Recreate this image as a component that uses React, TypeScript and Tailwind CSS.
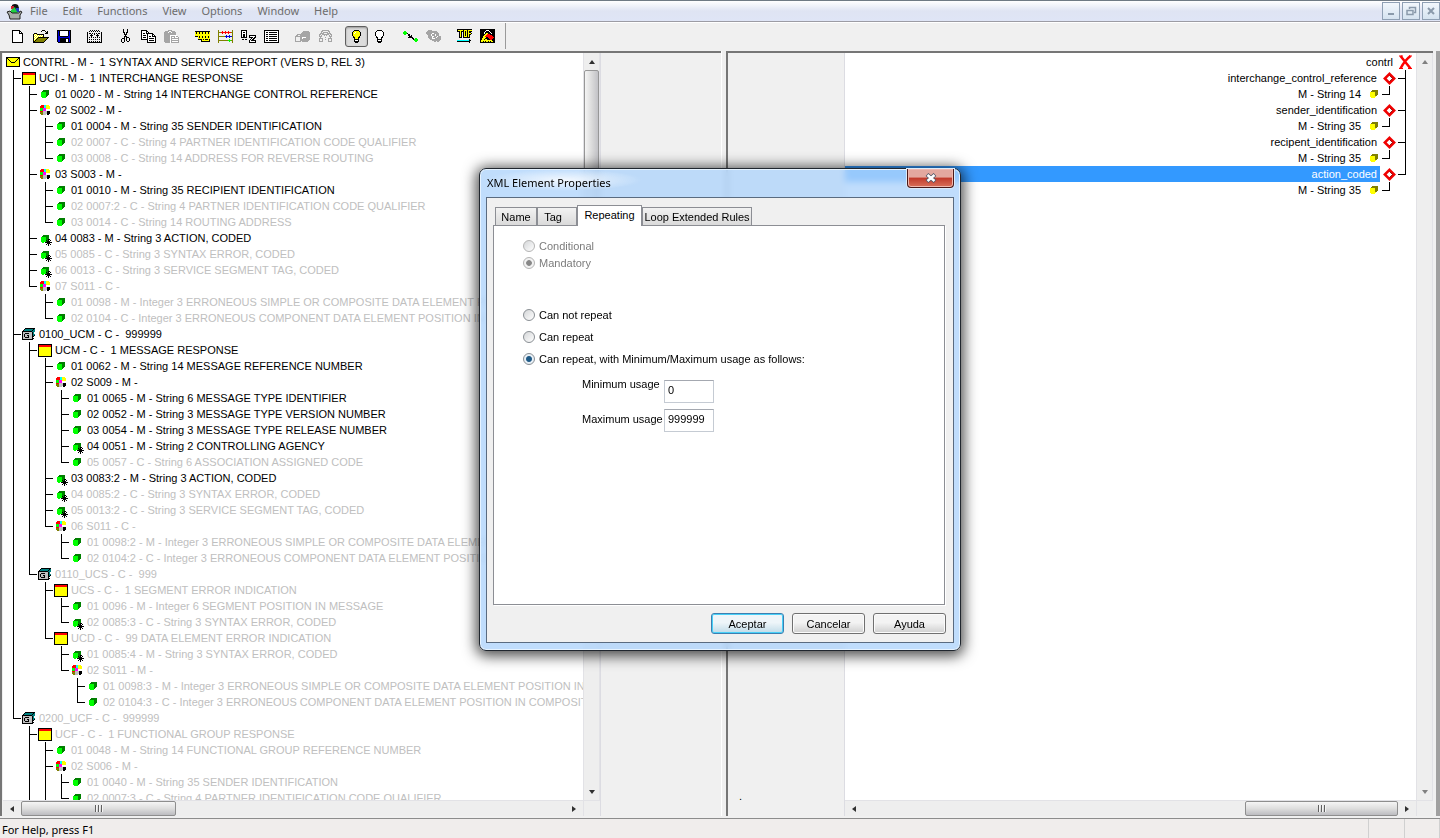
import { useState } from "react";
import type { ReactNode } from "react";
import clsx from "clsx";

const PALETTE: Record<string, string> = {
  k: "#000000",
  w: "#ffffff",
  y: "#ffff00",
  o: "#808000",
  b: "#0000d8",
  g: "#00ff00",
  d: "#008000",
  r: "#ff0000",
  c: "#00ffff",
  m: "#ff00ff",
  s: "#c0c0c0",
  a: "#a5a5a5",
  t: "#008080",
};

// Draws a bitmap glyph, one character per pixel
function Bitmap({ rows }: { rows: string[] }) {
  const width = Math.max(...rows.map((row) => row.length));
  return (
    <svg width={width} height={rows.length} viewBox={`0 0 ${width} ${rows.length}`} shapeRendering="crispEdges" className="shrink-0" aria-hidden="true">
      {rows.flatMap((row, y) =>
        [...row].map((ch, x) => (PALETTE[ch] ? <rect key={`${x}-${y}`} x={x} y={y} width="1" height="1" fill={PALETTE[ch]} /> : null)),
      )}
    </svg>
  );
}

const BITMAPS = {
  newFile: ["kkkkkkkk...", "kwwwwwwkk..", "kwwwwwwkwk.", "kwwwwwwkkkk", "kwwwwwwwwwk", "kwwwwwwwwwk", "kwwwwwwwwwk", "kwwwwwwwwwk", "kwwwwwwwwwk", "kwwwwwwwwwk", "kwwwwwwwwwk", "kwwwwwwwwwk", "kkkkkkkkkkk"],
  open: [".........kkk....", "........k...k.k.", ".............kk.", ".kkk........kkk.", "kywykkkkkkk.....", "kwywywywywk.....", "kywywywywyk.....", "kwywykkkkkkkkkkk", "kywykoooooooook.", "kwykoooooooook..", "kykoooooooook...", "kkoooooooook....", "kkkkkkkkkkk....."],
  save: ["kkkkkkkkkkkkkk", "kbkwwwwwwwwkbk", "kbkwwwwwwwwkbk", "kbkwwwwwwwwkbk", "kbkwwwwwwwwkbk", "kbkwwwwwwwwkbk", "kbbkkkkkkkkbbk", "kbbbbbbbbbbbbk", "kbbkkkkkkkkkbk", "kbbkkkkkkwwkbk", "kbbkkkkkkwwkbk", "kbbkkkkkkwwkbk", ".kkkkkkkkkkkkk"],
  compile: ["...k.k.k.k.k...", "..k.k.k.k.k.k..", "k.............k", "k.kk.k.k.k.kk.k", "k...k..k..k...k", "k..kkk...kkk..k", "k...k.....k...k", "k.k.k.k.k.k.k.k", "k.............k", "k.k.k.k.k.k.k.k", "k.............k", "k.k.k.k.k.k.k.k", "kkkkkkkkkkkkkkk"],
  cut: ["..k...k..", "..k...k..", "..k...k..", "..kk.kk..", "...k.k...", "...kkk...", "....k....", "...kkk...", "...k.kkk.", ".kkk.k..k", "k..k.k..k", "k..k.k..k", "k..k..kk.", ".kk......"],
  copy: ["kkkkkk.........", "kwwwwkk........", "kwwwwkwk.......", "kwkkwkkkkkkk...", "kwwwwwkwwwwkk..", "kwkkkwkwwwwkwk.", "kwwwwwkwkkwkkkk", "kwkkkwkwwwwwwwk", "kwwwwwkwkkkkkwk", "kkkkkkkwwwwwwwk", "......kwkkkkkwk", "......kwwwwwwwk", "......kkkkkkkkk"],
  paste: ["....aaaa.......", ".aaaawwaaaa....", "aaaawaawaaaa...", "aaaaaaaaaaaa...", "aaaaaaaaaaaa...", "aaaaaawwwwwww..", "aaaaaawaaaawaa.", "aaaaaawawwawwwa", "aaaaaawaaaaaaaa", "aaaaaawawwwwwwa", "aaaaaawaaaaaaaa", "aaaaaawawwwwwwa", ".aaaaawaaaaaaaa"],
  ruler: ["kkkkkkkkkkkkkkk", "ykyykyykyykyyky", "ykyykyykyykyyky", "yyyyyyyyyyyyyyy", "yyyyyyyyyyyyyyy", "kkkykyykyykyyky", "...ykyykyykyyky", "...yyyyyyyyyyyy", "...kkkkykykkkyk", "......kyyyyyyyk", "......kkkkkkkkk"],
  abacus: ["o.............o", "o...r..r..r...o", "ooorrrrrrrrrroo", "o...r..r..r...o", "o.............o", "o.......b..b..o", "ooooooobbbbbbbo", "o.......b..b..o", "o.............o", "o..........g..o", "oooooooooogggoo", "o..........g..o", "o.............o"],
  sortAz: ["kkkkkk.........", "kwwwwk.........", "kwkkwk.........", "kwwwwk.........", "kwkkwk.........", "kwkkwk..kkkkkkk", "kwkkwk..kwwwwwk", "kkkkkk..kkkkwkk", "..........kwkk.", ".kk.kk...kwkk..", "........kwkkkkk", "........kwwwwwk", "........kkkkkkk"],
  list: ["kkkkkkkkkkkkkkk", "kwwwwwwwwwwwwwk", "kwkkwkkkkkkkkwk", "kwwwwwwwwwwwwwk", "kwkkwkkkkkkkkwk", "kwwwwwwwwwwwwwk", "kwkkwkkkkkkkkwk", "kwwwwwwwwwwwwwk", "kwkkwkkkkkkkkwk", "kwwwwwwwwwwwwwk", "kwkkwkkkkkkkkwk", "kwwwwwwwwwwwwwk", "kkkkkkkkkkkkkkk"],
  blocks: ["........aaaaaa.", ".......aaaaaaaa", "......aaaaaaaaa", "..aaaaaaaaaaaaa", ".aa..aaaaaaaaaa", "aaaaaaaaaaaaaaa", "a....aawwwwaaaa", "a....aawaaaaaaa", "a....aaaaaaaaaa", "a....aaaaaaaaa.", "aaaaaa.aaaaaa.."],
  network: ["....aaaaaaa....", "...aa.....aa...", "...a.aaaaa.a...", "..aaaa...aaaa..", ".aa.aaaaaaa.aa.", ".a.a..a.a..a.a.", ".aaa.......aaa.", "..a....a....a..", ".aaaa.....aaaa.", ".a..a..a..a..a.", ".a..a.....a..a.", ".aaaa.....aaaa."],
  bulbOn: ["..kkkkk..", ".kyyyyyk.", "kyywyyyyk", "kywyyyyyk", "kyyyyyyyk", "kyyyyyyyk", ".kyyyyyk.", ".kkyyykk.", "..kyyyk..", "..kkkkk..", "..kwwwk..", "..kkkkk..", "...kkk..."],
  bulbOff: ["..kkkkk..", ".kwwwwwk.", "kwwwwwwwk", "kwwwwwwwk", "kwwwwwwwk", "kwwwwwwwk", ".kwwwwwk.", ".kkwwwkk.", "..kwwwk..", "..kkkkk..", "..kwwwk..", "..kkkkk..", "...kkk..."],
  link: [".gg............", "gggg...........", "ggggk..........", ".gg..kk........", ".....kk.k......", "......kkk......", ".....kkkkk.....", ".........kk.gg.", "..........kgggg", "...........gggg", "............gg."],
  unlink: ["..aaaa.........", ".aaaaaaaaaa....", "aaaaaaaaaaaa...", "aaaaaawwaaaaa..", ".aaaawaaawaaa..", "..aaawaaawaaa..", "..aaaawwaaawaaa", "..aaaawaaawaaaa", "...aaawwwaaaaaa", "....aaaaaaaaaaa", "......aaaaaaaa.", "........aa.aa.."],
  tof: ["kkkkkkkkkkkkkkk", "kyyyyykyyykyyyy", "kkkykkkykykykkk", "..kyk.kykykykk.", "..kyk.kykykyyyk", "..kyk.kykykykk.", "..kyk.kykykyk..", "..kyk.kyyykyk..", "..kkk.kkkkkkk..", "...............", "............k..", "cccccccccccckk.", "kkkkkkkkkkkkk..", "............k.."],
  warning: ["kkkkkkkkkkkkkkk", "kkkkkkwwwkkkkkk", "kkkkkwkkkwkkkkk", "kkkkwkkkkkwkkkk", "kkkkwkyykkkwkkk", "kkkkkyyrrrkkkkk", "kkkkyyrrrrrrkkk", "kkkyyrrrrrrrrkk", "kkkyyykkrrrrrrk", "kkyyykkkkrrrrkk", "kkyykyykkkrrkkk", "kyyyyyyyyyyykkk", "kyykykyykykyykk", "kkkkkkkkkkkkkkk"],
  envelope: ["kkkkkkkkkkkkkk", "kkyyyyyyyyyykk", "kykyyyyyyyykyk", "kyykyyyyyykyyk", "kyyykyyyykyyyk", "kyyyykkkkyyyyk", "kyyyyyyyyyyyyk", "kyyyyyyyyyyyyk", "kyyyyyyyyyyyyk", "kkkkkkkkkkkkkk"],
  segment: ["kkkkkkkkkkkkkk", "krrrrrrrrrrrrk", "krrrrrrrrrrrrk", "kyyyyyyyyyyyyk", "kyyyyyyyyyyyyk", "kyyyyyyyyyyyyk", "kyyyyyyyyyyyyk", "kyyyyyyyyyyyyk", "kyyyyyyyyyyyyk", "kyyyyyyyyyyyyk", "kyyyyyyyyyyyyk", "kyyyyyyyyyyyyk", "kkkkkkkkkkkkkk"],
  group: ["...kkkkkkkkkk", "..kttttttttkt", ".kttttttttktt", "kkkkkkkkkkttt", "kssssssssskt.", "ksskkkkssskt.", "ksksssssssktt", "ksksskksssktk", "kskssskssskk.", "ksskkkksssk..", "kssssssssskk.", "kkkkkkkkkkk.."],
  composite: [".rrrccyyy.", "rrrrccyyyy", "rrrrccyyyy", "gggmmmyyyy", "gggmmmwwww", "gggmmmwwww", "rrrsssskkk", "ooosssskkk", "ooosssskkk", ".oosss.kk."],
  element: ["..dddddd", ".ddddddd", "gggggddd", "gggggddd", "gggggddd", "gggggdd.", "gggggd..", ".gggg..."],
  repeated: ["..dddddd...", ".ddddddd...", "gggggddd...", "gggggddd...", "gggggddkk..", "gggggkdk.k.", "gggggdkkk..", ".gg.kkkkkkk", "......kkk..", ".....k.k.k.", ".......k..."],
  xmlElement: ["..oooooo", ".ooooooo", "yyyyyooo", "yyyyyooo", "yyyyyooo", "yyyyyoo.", "yyyyyy..", ".yyyy..."],
};

type BitmapName = keyof typeof BITMAPS;
type NodeKind = "envelope" | "segment" | "group" | "composite" | "element" | "repeated";
type TreeNode = [depth: number, kind: NodeKind, label: string, muted?: boolean];

const NODES: TreeNode[] = [
  [0, "envelope", "CONTRL - M -  1 SYNTAX AND SERVICE REPORT (VERS D, REL 3)"],
  [1, "segment", "UCI - M -  1 INTERCHANGE RESPONSE"],
  [2, "element", "01 0020 - M - String 14 INTERCHANGE CONTROL REFERENCE"],
  [2, "composite", "02 S002 - M -"],
  [3, "element", "01 0004 - M - String 35 SENDER IDENTIFICATION"],
  [3, "element", "02 0007 - C - String 4 PARTNER IDENTIFICATION CODE QUALIFIER", true],
  [3, "element", "03 0008 - C - String 14 ADDRESS FOR REVERSE ROUTING", true],
  [2, "composite", "03 S003 - M -"],
  [3, "element", "01 0010 - M - String 35 RECIPIENT IDENTIFICATION"],
  [3, "element", "02 0007:2 - C - String 4 PARTNER IDENTIFICATION CODE QUALIFIER", true],
  [3, "element", "03 0014 - C - String 14 ROUTING ADDRESS", true],
  [2, "repeated", "04 0083 - M - String 3 ACTION, CODED"],
  [2, "repeated", "05 0085 - C - String 3 SYNTAX ERROR, CODED", true],
  [2, "repeated", "06 0013 - C - String 3 SERVICE SEGMENT TAG, CODED", true],
  [2, "composite", "07 S011 - C -", true],
  [3, "element", "01 0098 - M - Integer 3 ERRONEOUS SIMPLE OR COMPOSITE DATA ELEMENT POSITION", true],
  [3, "element", "02 0104 - C - Integer 3 ERRONEOUS COMPONENT DATA ELEMENT POSITION IN", true],
  [1, "group", "0100_UCM - C -  999999"],
  [2, "segment", "UCM - C -  1 MESSAGE RESPONSE"],
  [3, "element", "01 0062 - M - String 14 MESSAGE REFERENCE NUMBER"],
  [3, "composite", "02 S009 - M -"],
  [4, "element", "01 0065 - M - String 6 MESSAGE TYPE IDENTIFIER"],
  [4, "element", "02 0052 - M - String 3 MESSAGE TYPE VERSION NUMBER"],
  [4, "element", "03 0054 - M - String 3 MESSAGE TYPE RELEASE NUMBER"],
  [4, "repeated", "04 0051 - M - String 2 CONTROLLING AGENCY"],
  [4, "element", "05 0057 - C - String 6 ASSOCIATION ASSIGNED CODE", true],
  [3, "repeated", "03 0083:2 - M - String 3 ACTION, CODED"],
  [3, "repeated", "04 0085:2 - C - String 3 SYNTAX ERROR, CODED", true],
  [3, "repeated", "05 0013:2 - C - String 3 SERVICE SEGMENT TAG, CODED", true],
  [3, "composite", "06 S011 - C -", true],
  [4, "element", "01 0098:2 - M - Integer 3 ERRONEOUS SIMPLE OR COMPOSITE DATA ELEMENT", true],
  [4, "element", "02 0104:2 - C - Integer 3 ERRONEOUS COMPONENT DATA ELEMENT POSITION", true],
  [2, "group", "0110_UCS - C -  999", true],
  [3, "segment", "UCS - C -  1 SEGMENT ERROR INDICATION", true],
  [4, "element", "01 0096 - M - Integer 6 SEGMENT POSITION IN MESSAGE", true],
  [4, "repeated", "02 0085:3 - C - String 3 SYNTAX ERROR, CODED", true],
  [3, "segment", "UCD - C -  99 DATA ELEMENT ERROR INDICATION", true],
  [4, "repeated", "01 0085:4 - M - String 3 SYNTAX ERROR, CODED", true],
  [4, "composite", "02 S011 - M -", true],
  [5, "element", "01 0098:3 - M - Integer 3 ERRONEOUS SIMPLE OR COMPOSITE DATA ELEMENT POSITION IN S", true],
  [5, "element", "02 0104:3 - C - Integer 3 ERRONEOUS COMPONENT DATA ELEMENT POSITION IN COMPOSITE", true],
  [1, "group", "0200_UCF - C -  999999", true],
  [2, "segment", "UCF - C -  1 FUNCTIONAL GROUP RESPONSE", true],
  [3, "element", "01 0048 - M - String 14 FUNCTIONAL GROUP REFERENCE NUMBER", true],
  [3, "composite", "02 S006 - M -", true],
  [4, "element", "01 0040 - M - String 35 SENDER IDENTIFICATION", true],
  [4, "element", "02 0007:3 - C - String 4 PARTNER IDENTIFICATION CODE QUALIFIER", true],
];

// Levels that still have siblings after the last loaded node
const OPEN_LEVELS = [2, 3];

function hasNextSibling(index: number, level: number) {
  const next = NODES.slice(index + 1).find(([depth]) => depth <= level);
  return next ? next[0] === level : OPEN_LEVELS.includes(level);
}

function Guide({ line, branch, flip }: { line: "full" | "half" | "none"; branch?: boolean; flip?: boolean }) {
  return (
    <svg width="16" height="16" viewBox="0 0 16 16" shapeRendering="crispEdges" className="shrink-0" aria-hidden="true">
      {line !== "none" && <rect x="8" y="0" width="1" height={line === "full" ? 16 : 9} />}
      {branch && <rect x={flip ? 1 : 8} y="8" width="8" height="1" />}
    </svg>
  );
}

function MessageTree() {
  return (
    <ul className="min-h-0 min-w-0 flex-1 overflow-hidden bg-white pl-[2px] pt-px">
      {NODES.map(([depth, kind, label, muted], index) => (
        <li key={label + index} className="flex h-4 items-center">
          {Array.from({ length: depth }, (_, cell) => {
            const more = hasNextSibling(index, cell + 1);
            const own = cell === depth - 1;
            return <Guide key={cell} branch={own} line={more ? "full" : own ? "half" : "none"} />;
          })}
          <span className={clsx("flex w-[18px] shrink-0", kind === "element" || kind === "repeated" ? "pl-[4px]" : kind === "composite" ? "pl-[3px]" : "pl-px", kind === "repeated" && "pt-1")}>
            <Bitmap rows={BITMAPS[kind]} />
          </span>
          <span className={clsx("whitespace-pre", muted ? "text-[#c0c0c0]" : "text-black")}>{label}</span>
        </li>
      ))}
    </ul>
  );
}

const XML_NODES = [
  { name: "interchange_control_reference", type: "M - String 14" },
  { name: "sender_identification", type: "M - String 35" },
  { name: "recipent_identification", type: "M - String 35" },
  { name: "action_coded", type: "M - String 35", selected: true },
];

function XmlTree() {
  return (
    <ul className="min-h-0 min-w-0 flex-1 overflow-hidden bg-white pt-px">
      <li className="flex h-4 items-center justify-end pr-[3px]">
        <span className="pr-[3px]">contrl</span>
        <span className="flex w-[17px] justify-end">
          <svg width="15" height="15" viewBox="0 0 15 15" aria-hidden="true">
            <path d="M2.500 1 L12.500 13.500 M12.500 1 Q7 5 2.500 13.500" stroke="#f00" strokeWidth="2.500" fill="none" />
            <path d="M1 1h4M11 1h3M1 13.500h4M10 13.500h4" stroke="#f00" />
          </svg>
        </span>
      </li>
      {XML_NODES.map(({ name, type, selected }, index) => {
        const last = index === XML_NODES.length - 1;
        return (
          <li key={name}>
            <div className="flex h-4 items-center pr-[3px]">
              <span className={clsx("h-4 flex-1 pr-[3px] text-right leading-4", selected && "bg-[#3399ff] text-white")}>{name}</span>
              <span className="flex w-[17px] justify-center pl-[2px]">
                <svg width="13" height="13" viewBox="0 0 13 13" aria-hidden="true">
                  <path d="M6.500 1.800 L11.200 6.500 L6.500 11.200 L1.800 6.500Z" fill="#fff" stroke="#f00000" strokeWidth="2.500" />
                  <path d="M6.500 3.500 L9.500 6.500 L6.500 9.500" fill="none" stroke="#700000" strokeWidth="0.700" />
                </svg>
              </span>
              <Guide flip branch line={last ? "half" : "full"} />
            </div>
            <div className="flex h-4 items-center justify-end pr-[3px]">
              <span className="pr-[3px]">{type}</span>
              <span className="flex w-[17px] justify-center pl-[2px]">
                <Bitmap rows={BITMAPS.xmlElement} />
              </span>
              <Guide flip branch line="half" />
              <Guide line={last ? "none" : "full"} />
            </div>
          </li>
        );
      })}
    </ul>
  );
}

function Arrow({ dir, dim }: { dir: "up" | "down" | "left" | "right"; dim?: boolean }) {
  const paths = { up: "M1 6 L4 2 L7 6Z", down: "M1 2 L4 6 L7 2Z", left: "M6 1 L2 4 L6 7Z", right: "M2 1 L6 4 L2 7Z" };
  const flat = dir === "left" || dir === "right";
  return (
    <button type="button" aria-label={`Scroll ${dir}`} className={clsx("flex h-4 shrink-0 items-center justify-center", flat ? "w-[18px]" : "w-[15px]")}>
      <svg width="8" height="8" viewBox="0 0 8 8" aria-hidden="true">
        <path d={paths[dir]} fill={dim ? "#808080" : "#303030"} />
      </svg>
    </button>
  );
}

function VerticalScroll({ thumb }: { thumb?: boolean }) {
  return (
    <div className="flex w-[17px] shrink-0 flex-col border-x border-[#e2e2e6] bg-[#eeeeee] pt-px">
      <Arrow dir="up" dim={!thumb} />
      {thumb && <div className="h-1/2 rounded-[2px] border border-[#979797] bg-linear-to-r from-[#f4f4f4] via-[#dcdcdc] to-[#c2c2c6]" />}
      <div className="flex-1" />
      <Arrow dir="down" dim={!thumb} />
    </div>
  );
}

function HorizontalScroll({ end }: { end?: boolean }) {
  return (
    <div className="flex h-4 shrink-0 border-t border-[#e2e2e6] bg-[#eeeeee]">
      <Arrow dir="left" />
      {end && <div className="flex-1" />}
      <div className="flex h-[15px] w-[26%] items-center justify-center gap-px rounded-[2px] border border-[#8e8e8e] bg-linear-to-b from-[#f5f5f5] via-[#dedede] to-[#bcbcc0]">
        {[0, 1, 2].map((grip) => (
          <span key={grip} className="h-[7px] w-[2px] border-r border-[#f4f4f4] bg-[#606060]" />
        ))}
      </div>
      {!end && <div className="flex-1" />}
      <Arrow dir="right" />
      <div className="w-[17px] border-l border-[#e2e2e6]" />
    </div>
  );
}

function AppLogo() {
  return (
    <svg width="17" height="17" viewBox="0 0 17 17" aria-hidden="true">
      <path d="M6 2 Q9 0 12 2 L13 5 L11 7 L6 6Z" fill="#111" />
      <path d="M5 3 L8 3 L8 6 L5 6Z" fill="#d02030" />
      <path d="M10 5 L13 5 L13 9 L10 9Z" fill="#2040c0" />
      <path d="M5 10 L5 7 L9 4 L10 7 L12 10Z" fill="#20d040" />
      <path d="M1 9 L4 8 L6 10 L13 10 L14 8 L16 9 L14 12 L14 16 L4 16 L3 12Z" fill="#a8ada8" stroke="#222" />
    </svg>
  );
}

const MENUS = ["File", "Edit", "Functions", "View", "Options", "Window", "Help"];

function MenuBar() {
  const caption = "flex h-[18px] w-[18px] items-center justify-center border border-[#8fa0b4] bg-linear-to-b from-[#f2f7fc] to-[#d5e3f0]";
  return (
    <header className="flex h-[22px] shrink-0 items-center border-t border-b border-t-[#6f7a84] border-b-[#9c9ca4] bg-linear-to-b from-white via-[#dfe4f3] to-[#dfe5f6] pl-[6px]">
      <AppLogo />
      <nav className="flex flex-1 gap-[15px] pl-[7px] font-[Noto_Sans,sans-serif] text-[11px] leading-4 text-[#6d6d6d]">
        {MENUS.map((menu) => (
          <button key={menu} type="button">{menu}</button>
        ))}
      </nav>
      <div className="flex gap-[2px]">
        <button type="button" aria-label="Minimize" className={caption}>
          <svg width="12" height="12" viewBox="0 0 12 12"><path d="M3 9h6" stroke="#8a9aab" strokeWidth="2" /></svg>
        </button>
        <button type="button" aria-label="Restore" className={caption}>
          <svg width="12" height="12" viewBox="0 0 12 12" fill="none" stroke="#8a9aab"><path d="M4.500 4V2.500h6v5H9" strokeWidth="1.500" /><path d="M2 5.500h6v4H2z" strokeWidth="1.500" /></svg>
        </button>
        <button type="button" aria-label="Close" className={caption}>
          <svg width="12" height="12" viewBox="0 0 12 12"><path d="M3 3l6 6M9 3l-6 6" stroke="#8a9aab" strokeWidth="2" /></svg>
        </button>
      </div>
    </header>
  );
}

const TOOLS: { icon: BitmapName; label: string }[][] = [
  [{ icon: "newFile", label: "New" }, { icon: "open", label: "Open" }, { icon: "save", label: "Save" }],
  [{ icon: "compile", label: "Compile" }],
  [{ icon: "cut", label: "Cut" }, { icon: "copy", label: "Copy" }, { icon: "paste", label: "Paste" }],
  [{ icon: "ruler", label: "Sizes" }, { icon: "abacus", label: "Counters" }, { icon: "sortAz", label: "Sort" }, { icon: "list", label: "List" }],
  [{ icon: "blocks", label: "Build" }, { icon: "network", label: "Structure" }],
  [{ icon: "bulbOn", label: "Show active" }, { icon: "bulbOff", label: "Show all" }],
  [{ icon: "link", label: "Link" }, { icon: "unlink", label: "Unlink" }],
  [{ icon: "tof", label: "Top of form" }, { icon: "warning", label: "Debug" }],
];

function Toolbar() {
  return (
    <div role="toolbar" className="flex h-[29px] shrink-0 items-center border-t border-white pb-[2px] pl-[6px]">
      <div className="flex h-full items-center gap-2 border-r border-[#9a9a9a] pr-[6px]">
        {TOOLS.map((group) => (
          <div key={group[0].label} className="flex">
            {group.map(({ icon, label }) => (
              <button
                key={icon}
                type="button"
                aria-label={label}
                className={clsx("flex h-[21px] w-[23px] items-center justify-center", icon === "bulbOn" && "rounded-[3px] border border-[#5f5f5f] bg-[#dcdcdc] shadow-[inset_0_1px_2px_#999]")}
              >
                <Bitmap rows={BITMAPS[icon]} />
              </button>
            ))}
          </div>
        ))}
      </div>
    </div>
  );
}

function Radio({ name, children, checked, disabled, onChange }: { name: string; children: ReactNode; checked: boolean; disabled?: boolean; onChange?: () => void }) {
  return (
    <label className={clsx("flex h-4 items-center gap-[4px]", disabled && "text-[#7c7c7c]")}>
      <input
        type="radio"
        name={name}
        checked={checked}
        disabled={disabled}
        onChange={() => onChange?.()}
        className={clsx(
          "size-[12px] shrink-0 appearance-none rounded-full border",
          disabled ? "border-[#b4b4b4]" : "border-[#8a8f94]",
          checked
            ? disabled
              ? "bg-radial from-[#888888] from-35% to-[#f2f2f2] to-45%"
              : "bg-radial from-[#1f5a86] from-35% to-[#e8f0f6] to-50%"
            : "bg-linear-to-br from-[#d4d6d8] to-white",
        )}
      />
      {children}
    </label>
  );
}

const TABS = ["Name", "Tag", "Repeating", "Loop Extended Rules"];
const USAGES = ["Can not repeat", "Can repeat", "Can repeat, with Minimum/Maximum usage as follows:"];

function PropertiesDialog() {
  const [tab, setTab] = useState("Repeating");
  const [usage, setUsage] = useState(USAGES[2]);
  const button = "h-[21px] w-[73px] rounded-[3px] border border-[#707070] bg-linear-to-b from-[#f3f3f3] from-45% to-[#cfcfcf] shadow-[inset_0_0_0_1px_#fbfbfb]";
  const field = "h-[23px] w-[50px] border border-[#c5cbd3] border-t-[#a4a8b0] bg-white px-[3px] pb-[3px]";
  return (
    <div role="dialog" aria-labelledby="dialog-title" className="absolute top-[168px] left-1/2 w-[482px] -translate-x-1/2 rounded-[7px] border border-[#20262e] bg-[#b0d4fb]/80 px-[6px] pb-[7px] shadow-[0_2px_14px_3px_rgba(0,0,0,0.7),inset_0_0_0_1px_#e6f3ff] backdrop-blur-[3px]">
      <div className="flex h-[28px] items-start justify-between">
        <h2 id="dialog-title" className="bg-radial from-white/80 to-transparent to-70% pt-[6px] pr-8 pl-px font-[Noto_Sans,sans-serif] text-[11px] leading-4 text-black">
          XML Element Properties
        </h2>
        <button type="button" aria-label="Close dialog" className="flex h-[19px] w-[47px] items-center justify-center rounded-b-[4px] border border-t-0 border-[#4a1a1a] bg-linear-to-b from-[#e3a89f] from-45% via-[#c0392b] via-50% to-[#d9705a] shadow-[inset_0_0_0_1px_#f0b8ae,0_0_0_1px_#dcecfb]">
          <svg width="12" height="10" viewBox="0 0 12 10" aria-hidden="true">
            <path d="M2 1.500 L10 8.500 M10 1.500 L2 8.500" stroke="#4d5566" strokeWidth="4" />
            <path d="M2.500 2 L9.500 8 M9.500 2 L2.500 8" stroke="#fff" strokeWidth="2.500" />
          </svg>
        </button>
      </div>
      <div className="border border-[#5a6b80] bg-[#f0f0f0] pt-[7px] pr-[8px] pb-[8px] pl-[6px]">
        <div role="tablist" className="flex items-end pl-[2px]">
          {TABS.map((name) => (
            <button
              key={name}
              type="button"
              role="tab"
              aria-selected={tab === name}
              onClick={() => setTab(name)}
              className={clsx(
                "border border-b-0 border-[#8c8e94] whitespace-nowrap",
                name === "Name" && "w-[42px]",
                name === "Tag" && "w-[40px] pr-2",
                name === "Repeating" && "w-[65px]",
                name === "Loop Extended Rules" && "w-[110px]",
                tab === name ? "relative -mb-px h-[21px] bg-white pb-[2px]" : "h-[18px] bg-linear-to-b from-[#f2f2f2] to-[#dadada]",
              )}
            >
              {name}
            </button>
          ))}
        </div>
        <form id="usage-form" onSubmit={(e) => e.preventDefault()} className="h-[380px] border border-[#8c8e94] bg-white pt-[12px] pl-[29px] shadow-[1px_1px_0_#fff]">
          <Radio name="presence" checked={false} disabled>Conditional</Radio>
          <div className="mt-px">
            <Radio name="presence" checked disabled>Mandatory</Radio>
          </div>
          <div className="mt-[36px] flex flex-col gap-[6px]">
            {USAGES.map((option) => (
              <Radio key={option} name="usage" checked={usage === option} onChange={() => setUsage(option)}>
                {option}
              </Radio>
            ))}
          </div>
          <div className="mt-[9px] grid grid-cols-[82px_50px] items-start gap-y-[2px] pl-[59px]">
            <label htmlFor="min-usage" className="whitespace-nowrap">Minimum usage</label>
            <div className="pt-[4px]">
              <input id="min-usage" defaultValue="0" className={field} />
            </div>
            <label htmlFor="max-usage" className="pt-[6px] whitespace-nowrap">Maximum usage</label>
            <div className="pt-[4px]">
              <input id="max-usage" defaultValue="999999" className={field} />
            </div>
          </div>
        </form>
        <div className="mt-2 -mr-px flex justify-end gap-2">
          <button type="submit" form="usage-form" className="h-[21px] w-[73px] rounded-[3px] border border-[#3c7fb1] bg-linear-to-b from-[#eef5f9] from-45% to-[#c0dbe8] shadow-[inset_0_0_0_1px_#48d0f8]">
            Aceptar
          </button>
          <button type="button" className={button}>Cancelar</button>
          <button type="button" className={button}>Ayuda</button>
        </div>
      </div>
    </div>
  );
}

export default function App() {
  return (
    <div className="relative flex h-screen flex-col overflow-hidden bg-[#f0f0f0] font-[Liberation_Sans,sans-serif] text-[11px] leading-4 text-black">
      <MenuBar />
      <Toolbar />
      <main className="flex min-h-0 flex-1 border-b border-[#8c8c8c] pb-[2px]">
        <section aria-label="Message structure" className="flex min-w-0 flex-[51] border-t-2 border-l-2 border-[#767676]">
          <div className="flex min-w-0 flex-1 flex-col pl-px">
            <div className="flex min-h-0 flex-1">
              <MessageTree />
              <VerticalScroll thumb />
            </div>
            <HorizontalScroll />
          </div>
          <div className="w-[121px] shrink-0 border-l border-[#dcdce2]" />
        </section>
        <div className="w-[5px] shrink-0 border-l border-white" />
        <section aria-label="XML structure" className="flex min-w-0 flex-[50] border-t-2 border-l-2 border-[#767676]">
          <div className="flex w-[117px] shrink-0 items-end border-r border-[#dcdce2] pb-[12px] pl-[11px]">.</div>
          <div className="flex min-w-0 flex-1 flex-col">
            <div className="flex min-h-0 flex-1">
              <XmlTree />
              <VerticalScroll />
            </div>
            <HorizontalScroll end />
          </div>
        </section>
        <div className="w-[7px] shrink-0 border-r-4 border-[#a0a0a0]" />
      </main>
      <footer className="flex h-[19px] shrink-0 items-center bg-[#f0edec] pl-[2px] font-[Noto_Sans,sans-serif] text-[11px] leading-4">
        <span className="flex-1 pt-[3px]">For Help, press F1</span>
        <span className="h-full w-[36px] border-l border-[#d0d0d0]" />
        <span className="h-full w-[36px] border-x border-[#d0d0d0]" />
      </footer>
      <PropertiesDialog />
    </div>
  );
}
